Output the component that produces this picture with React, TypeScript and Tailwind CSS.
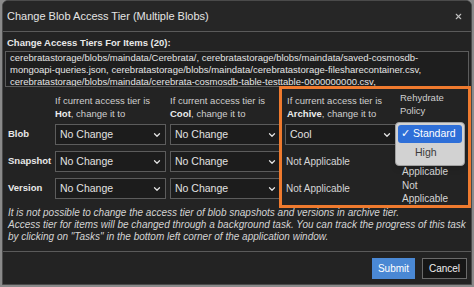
import { ChevronDown, X } from "lucide-react";

const itemLines = [
    "cerebratastorage/blobs/maindata/Cerebrata/, cerebratastorage/blobs/maindata/saved-cosmosdb-",
    "mongoapi-queries.json, cerebratastorage/blobs/maindata/cerebratastorage-filesharecontainer.csv,",
    "cerebratastorage/blobs/maindata/cerebrata-cosmosdb-table-testtable-0000000000.csv,",
];

const Select = ({ value }: { value: string }) => (
    <div className="flex h-[21px] items-center justify-between border border-[#5c5c5c] bg-[#1c1c1c] pl-[4px] pr-[3px] text-[10.5px] text-[#e2e2e2]">
        <span>{value}</span>
        <ChevronDown className="h-[10px] w-[10px]" strokeWidth={3} />
    </div>
);

const NotApplicable = () => (
    <div className="flex h-[21px] items-center pl-[1px] text-[#d6d6d6]">Not Applicable</div>
);

const rows = [
    { label: "Blob", archive: <Select value="Cool" /> },
    { label: "Snapshot", archive: <NotApplicable /> },
    { label: "Version", archive: <NotApplicable /> },
];

export default function App() {
    return (
        <div
            className="h-[287px] w-[474px] overflow-hidden bg-[#8a8a8a] text-[10px] text-[#dcdcdc]"
            style={{ fontFamily: '"Liberation Sans", Arial, sans-serif' }}
        >
            <div className="relative mx-[2px] flex h-[285px] flex-col overflow-hidden rounded-t-[6px] border border-[#4a4a4a] bg-[#232323]">
                {/* Header */}
                <div className="flex h-[31px] shrink-0 items-center justify-between border-b border-[#5a5a5a] bg-[#262626] pl-[4px] pr-[8px]">
                    <span className="text-[11px] text-[#e4e4e4]">Change Blob Access Tier (Multiple Blobs)</span>
                    <X className="h-[9px] w-[9px] text-[#bdbdbd]" strokeWidth={3} />
                </div>

                {/* Body */}
                <div className="flex min-h-0 flex-1 flex-col overflow-hidden px-[2px] pt-[4px]">
                    <div className="pl-[2px] text-[9.5px] font-bold leading-[14px] text-[#e8e8e8]">Change Access Tiers For Items (20):</div>
                    <div className="mt-[1px] h-[36px] overflow-hidden whitespace-nowrap border border-[#5c5c5c] bg-[#1e1e1e] px-[4px] text-[9.5px] leading-[12px] text-[#e4e4e4]">
                        {itemLines.map((line) => (
                            <div key={line}>{line}</div>
                        ))}
                    </div>

                    <div className="mt-[7px] grid grid-cols-[43px_111px_111px_111px_66px] gap-x-[4px] gap-y-[6px] pl-[3px]">
                        <div />
                        <div className="-mb-[2px] whitespace-nowrap text-[9.5px] leading-[13px] text-[#cfcfcf]">
                            If current access tier is
                            <br />
                            <b className="text-[#ececec]">Hot</b>, change it to
                        </div>
                        <div className="-mb-[2px] whitespace-nowrap text-[9.5px] leading-[13px] text-[#cfcfcf]">
                            If current access tier is
                            <br />
                            <b className="text-[#ececec]">Cool</b>, change it to
                        </div>
                        <div className="-mb-[2px] whitespace-nowrap pl-[2px] text-[9.5px] leading-[13px] text-[#cfcfcf]">
                            If current access tier is
                            <br />
                            <b className="text-[#ececec]">Archive</b>, change it to
                        </div>
                        <div className="-mb-[2px] -mt-[3px] text-[9.5px] leading-[13px] text-[#cfcfcf]">
                            Rehydrate
                            <br />
                            Policy
                        </div>

                        {rows.map((row) => (
                            <div key={row.label} className="contents">
                                <div className="flex h-[21px] items-center text-[9.5px] font-bold text-[#e8e8e8]">{row.label}</div>
                                <Select value="No Change" />
                                <Select value="No Change" />
                                {row.archive}
                                {row.label === "Blob" ? (
                                    <div />
                                ) : (
                                    <div className="h-[21px] pl-[2px] pt-[1px] leading-[13px] text-[#d6d6d6]">
                                        Not
                                        <br />
                                        Applicable
                                    </div>
                                )}
                            </div>
                        ))}
                    </div>

                    <div className="mt-[8px] whitespace-nowrap pl-[3px] italic leading-[12px] text-[#d4d4d4]">
                        It is not possible to change the access tier of blob snapshots and versions in archive tier.
                        <br />
                        Access tier for items will be changed through a background task. You can track the progress of this task
                        <br />
                        by clicking on "Tasks" in the bottom left corner of the application window.
                    </div>
                </div>

                {/* Footer */}
                <div className="flex h-[33px] shrink-0 items-center justify-end gap-[7px] border-t border-[#5a5a5a] pr-[4px]">
                    <button className="h-[21px] w-[43px] bg-[#4a88d4] text-[10px] text-white">Submit</button>
                    <button className="h-[21px] w-[45px] border border-[#6a6a6a] bg-[#161616] text-[10px] text-[#f0f0f0]">Cancel</button>
                </div>

                {/* Rehydrate dropdown popup */}
                <div className="absolute left-[392px] top-[121px] w-[70px] rounded-[4px] border border-[#a0a0a0] bg-[#d2d2d2] p-[2px] text-[10.5px] shadow-md">
                    <div className="flex h-[18px] items-center rounded-[3px] bg-[#2e6fd8] pl-[3px] text-white">
                        <span className="mr-[3px]">✓</span>Standard
                    </div>
                    <div className="flex h-[20px] items-center pl-[17px] text-[#3a3a3a]">High</div>
                </div>

                {/* Orange highlight annotation */}
                <div className="pointer-events-none absolute left-[276px] top-[85px] h-[122px] w-[192px] border-[3px] border-[#ef7a2e]" />
            </div>
        </div>
    );
}
